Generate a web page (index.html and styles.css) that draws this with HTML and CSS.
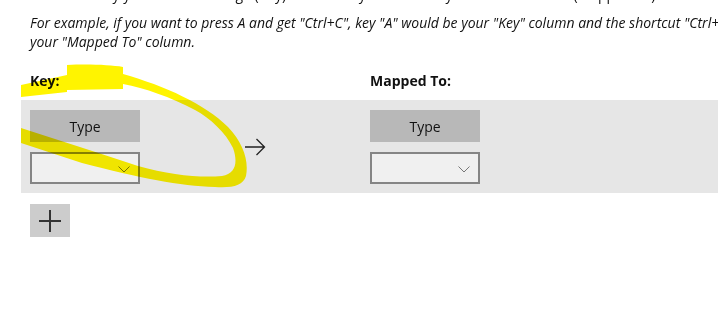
FILE: index.html
```html
<!DOCTYPE html>
<html lang="en">
<head>
  <meta charset="UTF-8" />
  <meta name="viewport" content="width=device-width, initial-scale=1.0"/>
  <title>Remap keys</title>
  <link rel="stylesheet" href="styles.css">
</head>
<body>

  <div class="page">
    <div class="intro">
      <p>Select the key you want to change (Key) and the key or shortcut you want it to send (Mapped To).</p>
      <p class="example">For example, if you want to press A and get "Ctrl+C", key "A" would be your "Key" column and the shortcut "Ctrl+C" would be your "Mapped To" column.</p>
    </div>

    <div class="cols labels">
      <span>Key:</span>
      <span></span>
      <span>Mapped To:</span>
    </div>

    <div class="cols remap-row">
      <div class="key-col">
        <button class="type-btn">Type</button>
        <div class="dropdown">
          <svg width="12" height="7" viewBox="0 0 12 7"><polyline points="0.5,0.5 6,6 11.5,0.5" fill="none" stroke="#777" stroke-width="1"/></svg>
        </div>
      </div>
      <div class="arrow">
        <svg width="21" height="18" viewBox="0 0 21 18"><path d="M0 9 H19.5 M11.5 1 L19.5 9 L11.5 17" fill="none" stroke="#222" stroke-width="1.3"/></svg>
      </div>
      <div class="key-col">
        <button class="type-btn">Type</button>
        <div class="dropdown">
          <svg width="12" height="7" viewBox="0 0 12 7"><polyline points="0.5,0.5 6,6 11.5,0.5" fill="none" stroke="#777" stroke-width="1"/></svg>
        </div>
      </div>
    </div>

    <button class="add-btn" title="Add a key remap">
      <svg width="22" height="22" viewBox="0 0 22 22"><path d="M0 11 H22 M11 0 V22" stroke="#333" stroke-width="2"/></svg>
    </button>

    <!-- highlighter mark drawn over the dialog -->
    <svg class="ink" width="718" height="326" viewBox="0 0 718 326">
      <path d="M21 85 L67 75 L67 65 C90 64 110 65 123 67 L123 74 C165 86 205 104 228 127 C243 143 249 160 246 176 C243 186 232 188 215 187 C180 186 140 178 82 163 L21 143 L21 128 C60 141 100 153 138 166 C170 175 200 178 222 176 C236 174 238 162 233 148 C226 133 210 118 195 110 C170 97 145 88 123 84 L123 89 L67 90 L67 92 L21 97 Z" fill="#fff400"/>
    </svg>
  </div>

</body>
</html>
```

FILE: styles.css
```css
* {
  box-sizing: border-box;
  margin: 0;
  padding: 0;
}

body {
  font-family: 'Open Sans', 'Noto Sans', sans-serif;
  font-size: 14px;
  color: #111;
  background: #fff;
  overflow: hidden;
}

.page {
  display: flow-root;
  position: relative;
  padding-left: 21px;
  min-height: 326px;
}

.intro {
  width: 800px;
  padding-left: 9px;
  margin-top: -15px;
}

.intro p {
  line-height: 19px;
}

.intro p.example {
  font-style: italic;
  margin-top: 9px;
}

.cols {
  display: grid;
  grid-template-columns: 110px 230px 110px;
  padding-left: 9px;
}

.labels {
  margin-top: 20px;
  font-weight: bold;
  line-height: 19px;
}

.remap-row {
  margin-top: 10px;
  background: #e6e6e6;
  padding-top: 10px;
  padding-bottom: 9px;
}

.key-col {
  display: flex;
  flex-direction: column;
  gap: 10px;
}

.type-btn {
  height: 32px;
  border: none;
  background: #b8b8b8;
  color: #111;
  font-family: inherit;
  font-size: 14px;
}

.dropdown {
  height: 32px;
  border: 2px solid #858585;
  background: #f0f0f0;
  display: flex;
  justify-content: flex-end;
  align-items: center;
  padding-right: 8px;
  padding-top: 2px;
}

.arrow {
  display: flex;
  align-items: center;
  padding-left: 105px;
}

.add-btn {
  margin: 11px 0 0 9px;
  width: 40px;
  height: 33px;
  border: none;
  background: #cccccc;
  display: flex;
  align-items: center;
  justify-content: center;
}

.ink {
  position: absolute;
  left: 0;
  top: 0;
  pointer-events: none;
  mix-blend-mode: multiply;
}
```
